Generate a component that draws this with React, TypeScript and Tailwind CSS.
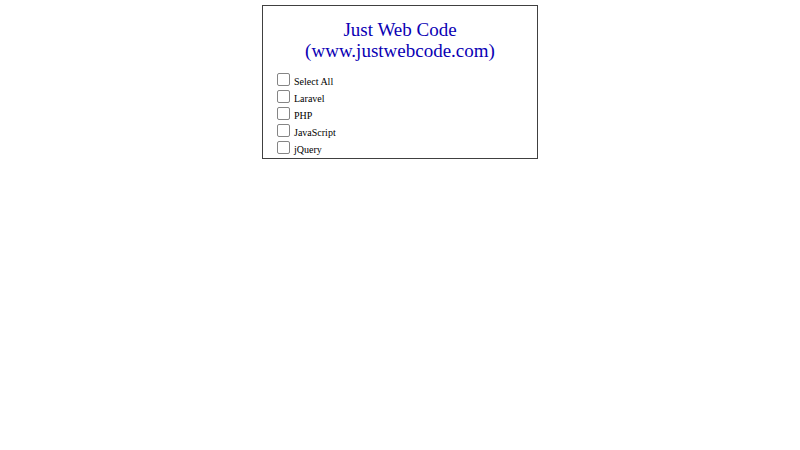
import React, { useState } from "react";

const skills = [
  { id: "laravel", label: "Laravel" },
  { id: "php", label: "PHP" },
  { id: "javascript", label: "JavaScript" },
  { id: "jquery", label: "jQuery" },
];

const rowClass = "flex h-[17px] items-start gap-1 text-[10px] leading-[18px]";

const checkboxClass =
  "appearance-none size-[13px] shrink-0 rounded-[2px] border border-[#858585] bg-white checked:bg-[#0075ff]";

export default function App() {
  const [selected, setSelected] = useState<string[]>([]);
  const allSelected = selected.length === skills.length;

  const toggleAll = () => {
    setSelected(allSelected ? [] : skills.map((skill) => skill.id));
  };

  const toggleSkill = (id: string) => {
    setSelected((prev) =>
      prev.includes(id) ? prev.filter((item) => item !== id) : [...prev, id]
    );
  };

  return (
    <div className="p-[5px] font-['Liberation_Serif',serif] text-black">
      <div className="mx-auto w-full max-w-[276px] border border-[#404040] px-[14px]">
        <h1 className="pt-[13px] text-center text-[19px] leading-[21px] text-[#0a00b4]">
          <a href="#home">
            Just Web Code
            <br />
            (www.justwebcode.com)
          </a>
        </h1>

        {/* Checkbox list */}
        <div className="mt-3">
          <label htmlFor="select-all" className={rowClass}>
            <input
              id="select-all"
              type="checkbox"
              className={checkboxClass}
              checked={allSelected}
              onChange={toggleAll}
            />
            Select All
          </label>
          {skills.map((skill) => (
            <label key={skill.id} htmlFor={skill.id} className={rowClass}>
              <input
                id={skill.id}
                type="checkbox"
                className={checkboxClass}
                checked={selected.includes(skill.id)}
                onChange={() => toggleSkill(skill.id)}
              />
              {skill.label}
            </label>
          ))}
        </div>
      </div>
    </div>
  );
}
